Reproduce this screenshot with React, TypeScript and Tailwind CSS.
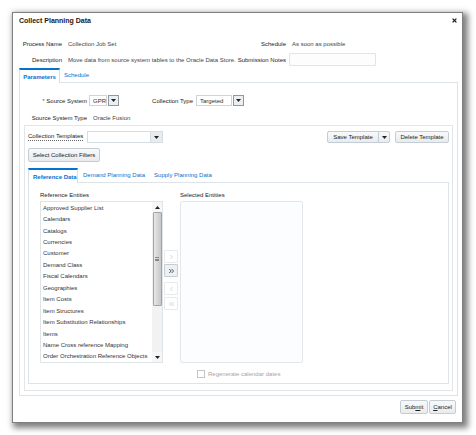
import React from "react";

const Tri = ({ up = false, color = "#222" }: { up?: boolean; color?: string }) => (
  <svg width="5" height="3" viewBox="0 0 5 3" className="block">
    {up ? <path d="M0 3H5L2.5 0Z" fill={color} /> : <path d="M0 0H5L2.5 3Z" fill={color} />}
  </svg>
);

const Btn = ({ children, className = "" }: { children: React.ReactNode; className?: string }) => (
  <div
    className={
      "flex items-center justify-center border border-[#c5cdd4] rounded-[2px] bg-gradient-to-b from-[#f8f9fa] to-[#e8ecef] text-[6px] text-[#222] whitespace-nowrap " +
      className
    }
  >
    {children}
  </div>
);

const Chev = ({ left = false, double = false, color }: { left?: boolean; double?: boolean; color: string }) => (
  <svg width="7" height="6" viewBox="0 0 7 6" className="block">
    {!left && !double && <path d="M2.5 1L4.5 3L2.5 5" stroke={color} strokeWidth="0.8" fill="none" />}
    {!left && double && (
      <>
        <path d="M1.2 1L3.2 3L1.2 5" stroke={color} strokeWidth="0.8" fill="none" />
        <path d="M3.6 1L5.6 3L3.6 5" stroke={color} strokeWidth="0.8" fill="none" />
      </>
    )}
    {left && !double && <path d="M4.5 1L2.5 3L4.5 5" stroke={color} strokeWidth="0.8" fill="none" />}
    {left && double && (
      <>
        <path d="M3.4 1L1.4 3L3.4 5" stroke={color} strokeWidth="0.8" fill="none" />
        <path d="M5.8 1L3.8 3L5.8 5" stroke={color} strokeWidth="0.8" fill="none" />
      </>
    )}
  </svg>
);

const Shuttle = ({ enabled, children }: { enabled: boolean; children: React.ReactNode }) => (
  <div
    className={
      enabled
        ? "h-[13px] w-[14px] flex items-center justify-center border border-[#c5cdd4] rounded-[1px] bg-[#eef1f3]"
        : "h-[13px] w-[14px] flex items-center justify-center border border-[#e8ebee] rounded-[1px] bg-white"
    }
  >
    {children}
  </div>
);

const items = [
  "Approved Supplier List",
  "Calendars",
  "Catalogs",
  "Currencies",
  "Customer",
  "Demand Class",
  "Fiscal Calendars",
  "Geographies",
  "Item Costs",
  "Item Structures",
  "Item Substitution Relationships",
  "Items",
  "Name Cross reference Mapping",
  "Order Orchestration Reference Objects",
];

export default function App() {
  return (
    <div className="w-[476px] h-[435px] bg-white pt-[12px] pl-[12px] font-['Liberation_Sans',Arial,sans-serif] text-[#222]">
      <div className="w-[451px] h-[411px] border border-[#7f7f7f] bg-white shadow-[3px_3px_6px_2px_rgba(0,0,0,0.5)] flex flex-col">
        {/* Title */}
        <div className="h-[15px] flex items-center justify-between pl-[6px] pr-[5px]">
          <span className="text-[7px] font-bold text-[#1a1a1a] leading-none">Collect Planning Data</span>
          <svg width="5" height="5" viewBox="0 0 5 5" className="block">
            <path d="M0.6 0.6L4.4 4.4M4.4 0.6L0.6 4.4" stroke="#1a1a1a" strokeWidth="1.3" />
          </svg>
        </div>

        {/* Header fields */}
        <div className="mt-[9px] pl-[6px] flex flex-col gap-[3px] text-[6px] leading-none">
          <div className="h-[13px] flex items-center">
            <div className="w-[43px] text-right text-[#222] whitespace-nowrap">Process Name</div>
            <div className="ml-[6px] w-[168px] text-[#444] whitespace-nowrap">Collection Job Set</div>
            <div className="w-[50px] text-right text-[#222] whitespace-nowrap">Schedule</div>
            <div className="ml-[3px] pl-[3px] text-[#444] whitespace-nowrap">As soon as possible</div>
          </div>
          <div className="h-[13px] flex items-center">
            <div className="w-[43px] text-right text-[#222] whitespace-nowrap">Description</div>
            <div className="ml-[6px] w-[168px] text-[#444] whitespace-nowrap">
              Move data from source system tables to the Oracle Data Store.
            </div>
            <div className="w-[50px] text-right text-[#222] whitespace-nowrap">Submission Notes</div>
            <div className="ml-[3px] w-[87px] h-[13px] border border-[#e0e5e9] rounded-[1px] bg-[#fdfdfe]" />
          </div>
        </div>

        {/* Tabs + panel */}
        <div className="mt-[2px] ml-[6px] mr-[4px] flex flex-col">
          <div className="h-[14px] flex items-start text-[6px] leading-none">
            <div className="h-[15px] w-[41px] relative z-10 flex items-center justify-center border-t-2 border-t-[#0572ce] border-x border-x-[#d9e0e5] bg-white font-bold text-[#0572ce]">
              Parameters
            </div>
            <div className="h-[14px] flex items-center pl-[4px] text-[#0572ce]">Schedule</div>
          </div>

          <div className="h-[314px] border border-[#dde3e8] flex flex-col text-[6px] leading-none">
            <div className="pt-[12px] flex flex-col">
              {/* Source system row */}
              <div className="h-[11px] flex items-center">
                <div className="w-[67px] text-right text-[#222] whitespace-nowrap">
                  <span className="text-[#0572ce]">*</span> Source System
                </div>
                <div className="ml-[2px] w-[18px] h-[11px] border border-[#cdd4da] bg-white flex items-center pl-[3px] text-[#333]">
                  GPR
                </div>
                <div className="ml-[1px] w-[11px] h-[11px] border border-[#8f99a2] bg-[#eceff1] flex items-center justify-center">
                  <Tri />
                </div>
                <div className="w-[74px] text-right text-[#222] whitespace-nowrap">Collection Type</div>
                <div className="ml-[3px] w-[36px] h-[11px] border border-[#cdd4da] bg-white flex items-center pl-[3px] text-[#333]">
                  Targeted
                </div>
                <div className="ml-[1px] w-[11px] h-[11px] border border-[#8f99a2] bg-[#eceff1] flex items-center justify-center">
                  <Tri />
                </div>
              </div>
              {/* Source System Type */}
              <div className="mt-[6px] h-[11px] flex items-center">
                <div className="w-[67px] text-right text-[#222] whitespace-nowrap">Source System Type</div>
                <div className="ml-[6px] text-[#444] whitespace-nowrap">Oracle Fusion</div>
              </div>
            </div>

            {/* Collection box */}
            <div className="mt-[2px] mx-[4px] h-[266px] border border-[#e1e6ea] flex flex-col">
              <div className="pt-[5px] px-[3px] flex items-center">
                <div className="w-[59px] h-[12px] flex items-center">
                  <span className="border-b border-dotted border-[#666] pb-[1px] text-[#222] whitespace-nowrap">
                    Collection Templates
                  </span>
                </div>
                <div className="w-[64px] h-[12px] border border-[#d6dde2] bg-white" />
                <div className="w-[12px] h-[12px] border border-l-0 border-[#d6dde2] bg-[#e9ecee] flex items-center justify-center">
                  <Tri />
                </div>
                <div className="flex-1" />
                <div className="h-[12px] w-[63px] flex border border-[#c5cdd4] rounded-[2px] bg-gradient-to-b from-[#f8f9fa] to-[#e8ecef] text-[#222]">
                  <div className="w-[50px] flex items-center justify-center whitespace-nowrap">Save Template</div>
                  <div className="flex-1 border-l border-[#c5cdd4] flex items-center justify-center">
                    <Tri />
                  </div>
                </div>
                <Btn className="ml-[5px] w-[54px] h-[12px]">Delete Template</Btn>
              </div>

              <Btn className="mt-[5px] ml-[3px] w-[72px] h-[14px]">Select Collection Filters</Btn>

              {/* Sub tabs */}
              <div className="mt-[6px] mx-[3px] flex flex-col">
                <div className="h-[14px] flex items-start">
                  <div className="h-[15px] w-[50px] relative z-10 flex items-center pl-[4px] border-t-2 border-t-[#0572ce] border-x border-x-[#d9e0e5] bg-white font-bold text-[#0572ce] whitespace-nowrap">
                    Reference Data
                  </div>
                  <div className="h-[14px] flex items-center ml-[5px] text-[#0572ce] whitespace-nowrap">
                    Demand Planning Data
                  </div>
                  <div className="h-[14px] flex items-center ml-[9px] text-[#0572ce] whitespace-nowrap">
                    Supply Planning Data
                  </div>
                </div>

                <div className="h-[202px] border border-[#dde3e8] flex pt-[9px] pl-[11px]">
                  {/* Left column */}
                  <div className="flex flex-col">
                    <div className="h-[9px] text-[#222] whitespace-nowrap">Reference Entities</div>
                    <div className="w-[123px] h-[162px] border border-[#dfe4e8] bg-white flex">
                      <div className="flex-1 flex flex-col pl-[2px] overflow-hidden">
                        {items.map((t) => (
                          <div key={t} className="h-[11.45px] shrink-0 flex items-center text-[#333] whitespace-nowrap">
                            {t}
                          </div>
                        ))}
                      </div>
                      <div className="w-[10px] flex flex-col bg-[#f2f2f2]">
                        <div className="h-[10px] flex items-center justify-center bg-[#f7f7f7]">
                          <Tri up />
                        </div>
                        <div className="h-[94px] mx-[0.5px] border border-[#a3a3a3] rounded-[1px] bg-gradient-to-r from-[#e8e8e8] via-[#d6d6d6] to-[#c8c8c8] flex flex-col items-center justify-center gap-[1px]">
                          <div className="w-[4px] h-[0.6px] bg-[#888]" />
                          <div className="w-[4px] h-[0.6px] bg-[#888]" />
                          <div className="w-[4px] h-[0.6px] bg-[#888]" />
                        </div>
                        <div className="flex-1" />
                        <div className="h-[10px] flex items-center justify-center bg-[#f7f7f7]">
                          <Tri />
                        </div>
                      </div>
                    </div>
                  </div>

                  {/* Shuttle */}
                  <div className="ml-[1px] mr-[2px] pt-[58px] flex flex-col">
                    <Shuttle enabled={false}>
                      <Chev color="#c8cdd1" />
                    </Shuttle>
                    <div className="mt-[1px]">
                      <Shuttle enabled>
                        <Chev double color="#333" />
                      </Shuttle>
                    </div>
                    <div className="mt-[5px]">
                      <Shuttle enabled={false}>
                        <Chev left color="#c8cdd1" />
                      </Shuttle>
                    </div>
                    <div className="mt-[2px]">
                      <Shuttle enabled={false}>
                        <Chev left double color="#c8cdd1" />
                      </Shuttle>
                    </div>
                  </div>

                  {/* Right column */}
                  <div className="flex flex-col">
                    <div className="h-[9px] text-[#222] whitespace-nowrap">Selected Entities</div>
                    <div className="w-[123px] h-[162px] border border-[#e3e7ea] rounded-[2px] bg-[#fcfdfe]" />
                    <div className="mt-[7px] pl-[17px] flex items-center">
                      <div className="w-[8px] h-[8px] border border-[#c4c4c4] bg-white" />
                      <span className="ml-[3px] text-[#a6a6a6] whitespace-nowrap">Regenerate calendar dates</span>
                    </div>
                  </div>
                </div>
              </div>
            </div>
          </div>
        </div>

        {/* Footer */}
        <div className="mt-[4px] pr-[6px] flex justify-end gap-[1px] text-[6px] leading-none">
          <Btn className="w-[28px] h-[14px]">
            Sub<span className="underline">m</span>it
          </Btn>
          <Btn className="w-[27px] h-[14px]">
            <span className="underline">C</span>ancel
          </Btn>
        </div>
      </div>
    </div>
  );
}
